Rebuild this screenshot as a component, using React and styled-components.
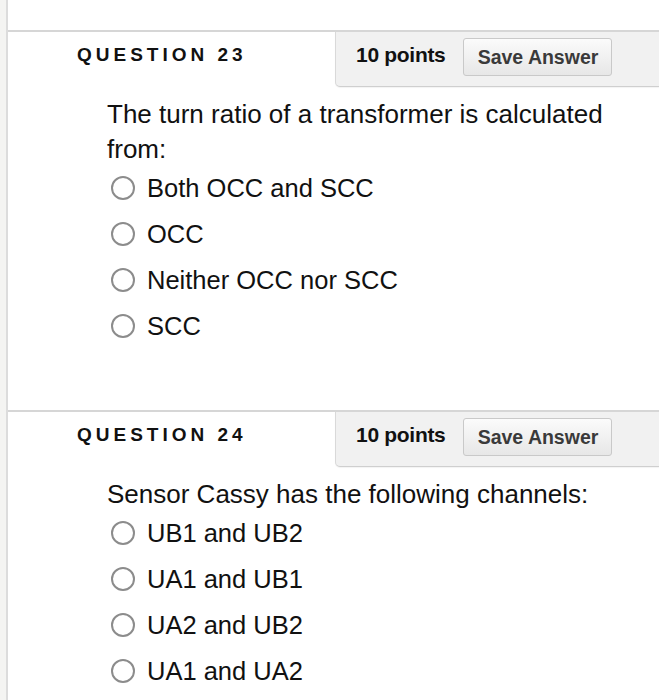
import React from 'react';
import styled, { createGlobalStyle } from 'styled-components';

const GlobalStyle = createGlobalStyle`
    html, body {
        margin: 0;
        padding: 0;
        background: #f4f4f2;
    }
    body {
        font-family: "Liberation Sans", Arial, sans-serif;
        color: #111;
    }
`;

const Frame = styled.div`
    margin-left: 6px;
    border-left: 2px solid #dcdcdc;
    background: #fff;
    min-height: 700px;
    padding-top: 30px;
`;

const Block = styled.section`
    border-top: 2px solid #d6d6d6;
    padding-bottom: ${p => p.$bottom || 0}px;
`;

const Header = styled.div`
    display: flex;
    align-items: stretch;
    height: 55px;
`;

const Title = styled.h2`
    width: 258px;
    margin: 0;
    padding: 12px 0 0 69px;
    font-size: 19px;
    font-weight: 700;
    letter-spacing: 4px;
    color: #111;
`;

const PointsBox = styled.div`
    flex: 1;
    display: flex;
    align-items: center;
    gap: 18px;
    padding-left: 20px;
    background: #f1f1f1;
    border-left: 1px solid #d9d9d9;
    border-bottom: 1px solid #cfcfcf;
    border-bottom-left-radius: 5px;
    box-shadow: 0 1px 1px rgba(0, 0, 0, 0.05);
`;

const Points = styled.span`
    margin-bottom: 9px;
    font-size: 21px;
    font-weight: 700;
    letter-spacing: -0.3px;
    color: #111;
`;

const SaveButton = styled.button`
    width: 149px;
    height: 38px;
    margin-bottom: 4px;
    border: 1px solid #c9c9c9;
    border-radius: 3px;
    background: linear-gradient(#fbfbfb, #e7e7e7);
    font-family: "Liberation Sans", Arial, sans-serif;
    font-size: 19.5px;
    font-weight: 700;
    color: #3a3a3a;
    padding: 0;
`;

const Body = styled.div`
    padding: 10px 20px 0 99px;
`;

const Prompt = styled.p`
    margin: 0 0 -2px;
    font-size: 26px;
    line-height: 35px;
    max-width: 530px;
`;

const Options = styled.ul`
    list-style: none;
    margin: 0;
    padding: 0;
`;

const Option = styled.li`
    display: flex;
    align-items: center;
    height: 46px;
    font-size: 25.5px;
    color: #111;
`;

const Radio = styled.span`
    box-sizing: border-box;
    width: 24px;
    height: 24px;
    margin: 0 12px 0 4px;
    border: 2px solid #8c8c8c;
    border-radius: 50%;
    background: #fff;
`;

function Question({ number, prompt, options, bottom }) {
    return (
        <Block $bottom={bottom}>
            <Header>
                <Title>QUESTION {number}</Title>
                <PointsBox>
                    <Points>10 points</Points>
                    <SaveButton>Save Answer</SaveButton>
                </PointsBox>
            </Header>
            <Body>
                <Prompt>{prompt}</Prompt>
                <Options>
                    {options.map(o => (
                        <Option key={o}>
                            <Radio />
                            {o}
                        </Option>
                    ))}
                </Options>
            </Body>
        </Block>
    );
}

export default function App() {
    return (
        <>
            <GlobalStyle />
            <Frame>
                <Question
                    number={23}
                    prompt="The turn ratio of a transformer is calculated from:"
                    options={['Both OCC and SCC', 'OCC', 'Neither OCC nor SCC', 'SCC']}
                    bottom={61}
                />
                <Question
                    number={24}
                    prompt="Sensor Cassy has the following channels:"
                    options={['UB1 and UB2', 'UA1 and UB1', 'UA2 and UB2', 'UA1 and UA2']}
                    bottom={0}
                />
            </Frame>
        </>
    );
}
